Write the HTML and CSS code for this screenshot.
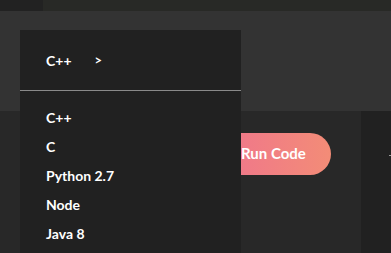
FILE: index.html
```html
<!DOCTYPE html>
<html>
<head>
<meta charset="utf-8">
<link rel="stylesheet" href="styles.css">
</head>
<body>
<div class="app">
  <div class="topbar">
    <div class="topbar-left"></div>
    <div class="topbar-rest"></div>
  </div>
  <div class="header"></div>
  <div class="content">
    <div class="editor">
      <button class="run-btn">Run Code</button>
    </div>
    <div class="side"><span class="mark"></span></div>
  </div>
  <div class="dropdown">
    <div class="dropdown-head">
      <span class="current">C++</span>
      <span class="caret">&gt;</span>
    </div>
    <ul class="options">
      <li>C++</li>
      <li>C</li>
      <li>Python 2.7</li>
      <li>Node</li>
      <li>Java 8</li>
    </ul>
  </div>
</div>
</body>
</html>
```
FILE: styles.css
```css
html, body {
  margin: 0;
  padding: 0;
  width: 391px;
  height: 253px;
  overflow: hidden;
  background: #282828;
  font-family: Lato, "Open Sans", sans-serif;
}
.app {
  position: relative;
  width: 391px;
  height: 253px;
  display: flex;
  flex-direction: column;
}
.topbar {
  height: 11px;
  display: flex;
}
.topbar-left {
  width: 43px;
  background: #222222;
}
.topbar-rest {
  flex: 1;
  background: #282926;
}
.header {
  height: 100px;
  background: #333333;
}
.content {
  flex: 1;
  display: flex;
}
.editor {
  width: 361px;
  background: #282828;
  padding-top: 22px;
  display: flex;
  justify-content: flex-end;
  align-items: flex-start;
  padding-right: 30px;
  box-sizing: border-box;
}
.run-btn {
  width: 150px;
  height: 42px;
  border: none;
  border-radius: 0 21px 21px 0;
  background: linear-gradient(90deg, #ec6a92 0%, #f07a88 40%, #f38c77 100%);
  color: #ffffff;
  font-family: Lato, sans-serif;
  font-weight: 700;
  font-size: 15px;
  text-align: left;
  padding: 0 0 2px 60px;
}
.side {
  flex: 1;
  background: #212121;
  position: relative;
}
.mark {
  position: absolute;
  left: 28px;
  top: 44px;
  width: 2px;
  height: 1px;
  background: #9a9a9a;
}
.dropdown {
  position: absolute;
  left: 20px;
  top: 30px;
  width: 221px;
  bottom: 0;
  background: #212121;
  color: #ffffff;
  font-weight: 700;
  font-size: 14px;
}
.dropdown-head {
  height: 60px;
  display: flex;
  align-items: center;
  padding-left: 26px;
  border-bottom: 1px solid #8a8a8a;
}
.caret {
  margin-left: 23px;
  font-size: 13px;
}
.options {
  list-style: none;
  margin: 0;
  padding: 12px 0 0 26px;
}
.options li {
  height: 29px;
  line-height: 29px;
}
```
